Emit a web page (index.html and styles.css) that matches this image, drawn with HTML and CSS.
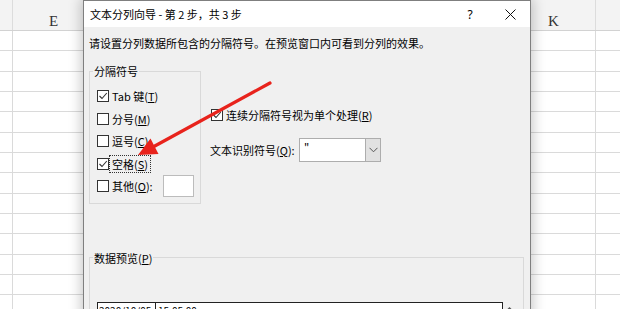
FILE: index.html
```html
<!DOCTYPE html>
<html lang="zh-CN">
<head>
<meta charset="utf-8">
<title>文本分列向导</title>
<link rel="stylesheet" href="styles.css">
</head>
<body>
<div class="sheet">
  <div class="sheet-head">
    <div class="col col-a"></div>
    <div class="col col-e">E</div>
    <div class="col col-mid"></div>
    <div class="col col-k">K</div>
    <div class="col col-rest"></div>
  </div>
  <div class="sheet-body"></div>
</div>

<div class="dialog">
  <div class="titlebar">
    <span class="title">文本分列向导 - 第 2 步，共 3 步</span>
    <span class="help">?</span>
    <span class="close"><svg width="11" height="11" viewBox="0 0 11 11"><path d="M0.5 0.5 L10.5 10.5 M10.5 0.5 L0.5 10.5" stroke="#111" stroke-width="1" fill="none"/></svg></span>
  </div>
  <div class="dbody">
    <p class="desc">请设置分列数据所包含的分隔符号。在预览窗口内可看到分列的效果。</p>
    <div class="options">
      <fieldset class="group delim">
        <legend>分隔符号</legend>
        <div class="chk"><span class="box checked"><svg width="10" height="10" viewBox="0 0 10 10"><path d="M1.5 5 L4 7.5 L8.8 2" stroke="#333" stroke-width="1.1" fill="none"/></svg></span><span>Tab 键(<u>T</u>)</span></div>
        <div class="chk"><span class="box"></span><span>分号(<u>M</u>)</span></div>
        <div class="chk"><span class="box"></span><span>逗号(<u>C</u>)</span></div>
        <div class="chk"><span class="box checked"><svg width="10" height="10" viewBox="0 0 10 10"><path d="M1.5 5 L4 7.5 L8.8 2" stroke="#333" stroke-width="1.1" fill="none"/></svg></span><span class="focus">空格(<u>S</u>)</span></div>
        <div class="chk"><span class="box"></span><span>其他(<u>O</u>):</span><span class="other-input"></span></div>
      </fieldset>
      <div class="right">
        <div class="chk"><span class="box checked"><svg width="10" height="10" viewBox="0 0 10 10"><path d="M1.5 5 L4 7.5 L8.8 2" stroke="#333" stroke-width="1.1" fill="none"/></svg></span><span>连续分隔符号视为单个处理(<u>R</u>)</span></div>
        <div class="qual">
          <span class="qual-label">文本识别符号(<u>Q</u>):</span>
          <div class="combo">
            <span class="combo-text">"</span>
            <span class="combo-btn"><svg width="9" height="6" viewBox="0 0 9 6"><path d="M0.5 0.8 L4.5 4.8 L8.5 0.8" stroke="#555" stroke-width="1" fill="none"/></svg></span>
          </div>
        </div>
      </div>
    </div>
    <fieldset class="group preview">
      <legend>数据预览(<u>P</u>)</legend>
      <div class="preview-row">
        <div class="ptable">
          <div class="pcell pcell-date">2020/10/05</div>
          <div class="pcell pcell-time">15:05:00</div>
        </div>
        <svg class="scroll-up" width="7" height="5" viewBox="0 0 7 5"><path d="M0 4.5 L3.5 1 L7 4.5 Z" fill="#555"/></svg>
      </div>
    </fieldset>
  </div>
</div>

<svg class="arrow" width="620" height="309" viewBox="0 0 620 309">
  <line x1="270" y1="83" x2="153" y2="147" stroke="#e8231c" stroke-width="3.2" stroke-linecap="round"/>
  <polygon points="138,155 158.5,154 150.5,138.5" fill="#e8231c"/>
</svg>
</body>
</html>
```

FILE: styles.css
```css
* { box-sizing: border-box; }
html, body { margin: 0; padding: 0; }
body {
  width: 620px;
  height: 309px;
  overflow: hidden;
  position: relative;
  background: #fff;
  color: #000;
  font-family: "Noto Sans CJK SC", "Noto Sans", sans-serif;
  font-size: 11px;
}
u { text-decoration: underline; text-underline-offset: 1px; }

/* spreadsheet background */
.sheet { height: 100%; display: flex; flex-direction: column; }
.sheet-head {
  height: 31px;
  flex: none;
  display: grid;
  grid-template-columns: 13px 82px 417px 84px 1fr;
  background: #f3f3f3;
  border-bottom: 1px solid #d2d2d2;
}
.col {
  border-right: 1px solid #dcdcdc;
  display: flex;
  align-items: center;
  justify-content: center;
  padding-top: 12px;
  font-family: "Liberation Serif", serif;
  font-size: 15px;
  color: #333;
}
.col-rest { border-right: none; }
.sheet-body {
  flex: 1;
  background:
    linear-gradient(#dadada, #dadada) 12px 0 / 1px 100% no-repeat,
    linear-gradient(#dadada, #dadada) 595px 0 / 1px 100% no-repeat,
    repeating-linear-gradient(to bottom, #fff 0 19.33px, #dadada 19.33px 20.33px);
}

/* dialog */
.dialog {
  position: absolute;
  left: 83px;
  top: 0;
  width: 448px;
  height: 340px;
  background: #f0f0f0;
  border: 1px solid #7f7f7f;
  box-shadow: 0 0 12px 2px rgba(0, 0, 0, 0.22);
}
.titlebar {
  height: 26px;
  background: #fff;
  display: flex;
  align-items: center;
  padding-left: 6px;
}
.title { font-size: 11px; }
.help {
  margin-left: auto;
  width: 24px;
  text-align: center;
  font-family: "Noto Sans", sans-serif;
  font-size: 12px;
  margin-right: 8px;
}
.close {
  width: 40px;
  display: flex;
  justify-content: center;
  align-items: center;
}
.dbody { padding: 0 6px 0 5px; }
.desc { margin: 9px 0 0; line-height: 14px; }

.options { display: flex; align-items: flex-start; margin-top: 14px; }
.group {
  margin: 0;
  min-width: 0;
  border: 1px solid #d9d9d9;
  padding: 0 0 0 7px;
}
.group legend {
  padding: 0 1px;
  margin-left: -4px;
  line-height: 14px;
  font-size: 11px;
}
.delim { width: 112px; padding-top: 7px; padding-bottom: 5px; }

.chk {
  display: flex;
  align-items: center;
  height: 22.5px;
  line-height: 14px;
  white-space: nowrap;
}
.box {
  width: 12px;
  height: 12px;
  flex: none;
  border: 1px solid #333;
  background: #fff;
  margin-right: 3px;
  display: flex;
  align-items: center;
  justify-content: center;
}
.focus {
  border: 1px dotted #333;
  padding: 1px 2px;
  margin-left: -3px;
  line-height: 14px;
}
.other-input {
  width: 31px;
  height: 22px;
  margin-left: 10px;
  background: #fff;
  border: 1px solid #bcbcbc;
}

.right { margin-left: 10px; padding-top: 40px; }
.right .chk { height: 22px; }
.qual { display: flex; align-items: center; margin-top: 12px; }
.qual-label { width: 89px; margin-left: -1px; }
.combo {
  width: 82px;
  height: 24px;
  display: flex;
  background: #fff;
  border: 1px solid #adadad;
}
.combo-text { flex: 1; padding-left: 4px; line-height: 18px; }
.combo-btn {
  width: 16px;
  margin: -1px -1px -1px 0;
  background: #e1e1e1;
  border: 1px solid #adadad;
  display: flex;
  align-items: center;
  justify-content: center;
}

.preview { width: 435px; margin-top: 47px; height: 80px; padding-top: 37px; }
.preview-row { display: flex; align-items: flex-start; }
.ptable {
  width: 406px;
  height: 30px;
  display: flex;
  background: #fff;
  border: 1px solid #222;
}
.pcell { font-size: 10px; line-height: 12px; padding: 2px 0 0 1px; }
.pcell-date { width: 58px; border-right: 1px solid #222; }
.pcell-time { padding-left: 2px; }
.scroll-up { margin: 4px 0 0 3px; }

.arrow { position: absolute; left: 0; top: 0; pointer-events: none; }
```
